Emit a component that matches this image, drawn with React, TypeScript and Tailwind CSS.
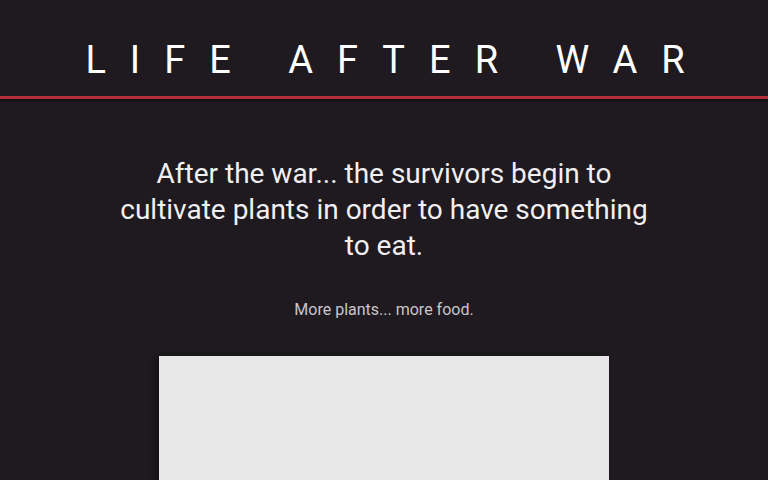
export default function App() {
  return (
    <div
      className="min-h-screen bg-[#1e1a1f] text-white"
      style={{ fontFamily: "Roboto, 'Liberation Sans', sans-serif" }}
    >
      <header className="h-[99px] border-b-[3px] border-[#b3303b] flex justify-center pt-[41px] shadow-[0_2px_2px_rgba(0,0,0,0.4)]">
        <h1 className="text-[38px] font-normal tracking-[24px] pl-[26px] leading-none">
          LIFE AFTER WAR
        </h1>
      </header>

      <main className="flex flex-col items-center">
        <p className="mt-[57px] w-[540px] text-center text-[28px] leading-[36px] text-[#f1eff1]">
          After the war... the survivors begin to cultivate plants in order to
          have something to eat.
        </p>

        <p className="mt-[34px] text-[16px] text-[#c9c5ca]">
          More plants... more food.
        </p>

        <div className="mt-[34px] w-[450px] h-[200px] bg-[#e8e7e8] shadow-[-4px_0_6px_rgba(0,0,0,0.35)]" />
      </main>
    </div>
  );
}
